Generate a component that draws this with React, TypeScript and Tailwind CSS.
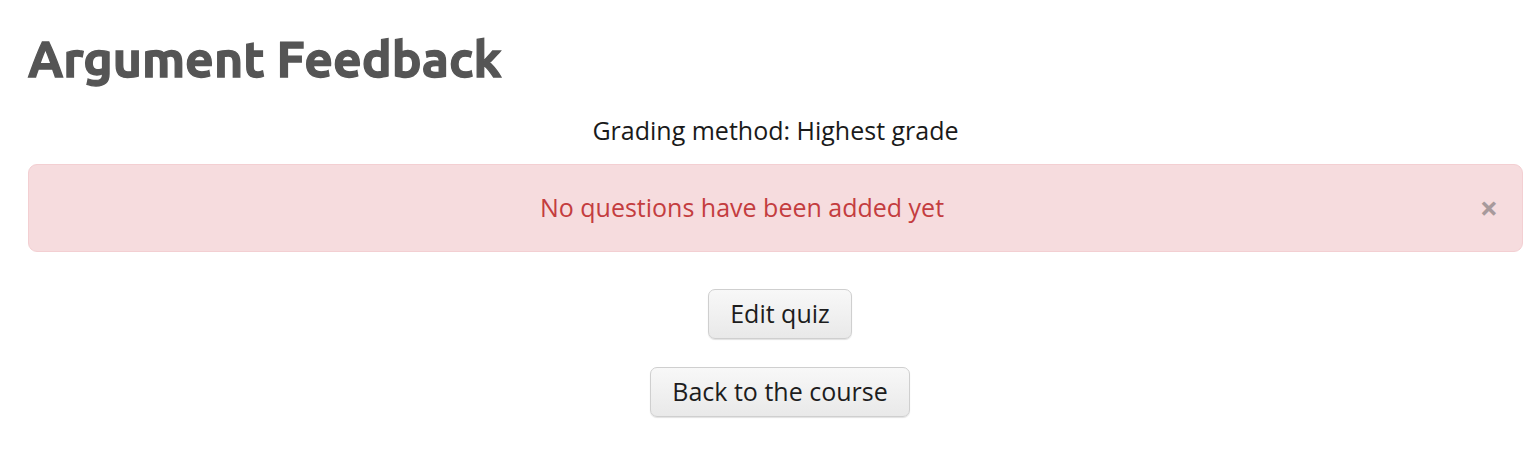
export default function App() {
  return (
    <div className="min-h-[471px] bg-white pl-[28px] pr-[13px] pt-[28px] font-['Open_Sans',sans-serif] text-[#1d2125]">
      <h1 className="font-['Ubuntu','Open_Sans',sans-serif] text-[50px] font-bold leading-[60px] text-[#555] [-webkit-text-stroke:1.3px_#555]">
        Argument Feedback
      </h1>
      <div className="mt-[25px] text-center text-[25px] leading-[34px] text-[#1a1a1a]">Grading method: Highest grade</div>
      <div className="relative mt-[17px] flex h-[88px] items-center justify-center rounded-[9px] border border-[#f3cfd2] bg-[#f6dcde] pl-[20px] pr-[87px] text-[25px] text-[#c43d3f]">
        No questions have been added yet
        <button className="absolute right-[24px] top-1/2 -translate-y-1/2 text-[32px] font-bold leading-none text-[#a89a9c]">
          ×
        </button>
      </div>
      <div className="mt-[37px] flex flex-col items-center gap-[28px] pl-[9px]">
        <button className="h-[50px] rounded-[7px] border border-[#cfcfcf] bg-gradient-to-b from-[#f8f8f8] to-[#e9e9e9] px-[21px] text-[25px] text-[#1d1d1d] shadow-[0_1px_1px_rgba(0,0,0,0.12)]">
          Edit quiz
        </button>
        <button className="h-[50px] rounded-[7px] border border-[#cfcfcf] bg-gradient-to-b from-[#f8f8f8] to-[#e9e9e9] px-[21px] text-[25px] text-[#1d1d1d] shadow-[0_1px_1px_rgba(0,0,0,0.12)]">
          Back to the course
        </button>
      </div>
    </div>
  );
}
